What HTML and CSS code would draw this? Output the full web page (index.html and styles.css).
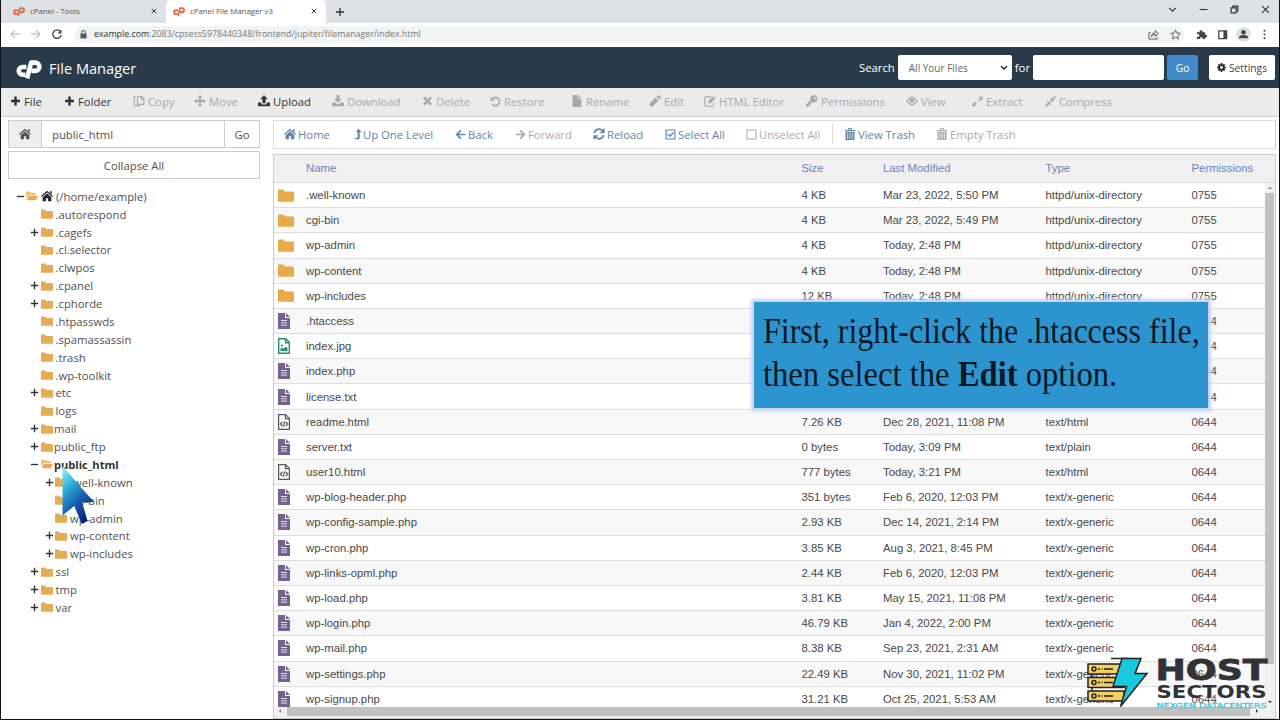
FILE: index.html
```html
<!DOCTYPE html>
<html lang="en">
<head>
<meta charset="UTF-8">
<meta name="viewport" content="width=device-width, initial-scale=1.0">
<title>cPanel File Manager v3</title>
<link rel="stylesheet" href="styles.css">
</head>
<body>
<!-- icon set -->
<svg class="sprite">
    <symbol id="cp" viewBox="0 0 24 18"><g fill="none" stroke="currentColor" stroke-width="4.300" stroke-linejoin="round"><path d="M9.600 6.600H6a3.700 3.700 0 0 0 0 7.400h2.600"/><path d="M10.200 17.400L14 2.500h4a3.900 3.900 0 0 1 0 7.800h-3.600"/></g></symbol>
    <symbol id="plus" viewBox="0 0 16 16"><path d="M6.200 1.500h3.600v4.700h4.700v3.600H9.800v4.700H6.200V9.800H1.500V6.200h4.700z"/></symbol>
    <symbol id="expand" viewBox="0 0 16 16"><path d="M6.800 1.500h2.400v5.300h5.300v2.400H9.200v5.300H6.800V9.200H1.500V6.800h5.300z"/></symbol>
    <symbol id="collapse" viewBox="0 0 16 16"><path d="M1.500 6.800h13v2.400h-13z"/></symbol>
    <symbol id="copy" viewBox="0 0 16 16"><path fill="none" stroke="currentColor" stroke-width="1.400" d="M6 2h5.500l3 3v7.500H6zM11 2v3.500h3.500M4 2H1.500v12.500H9"/></symbol>
    <symbol id="move" viewBox="0 0 16 16"><path d="M8 0l3 3.500H9.200v3.300h3.300V5L16 8l-3.500 3V9.200H9.200v3.300H11L8 16l-3-3.500h1.800V9.200H3.500V11L0 8l3.500-3v1.800h3.300V3.500H5z"/></symbol>
    <symbol id="upload" viewBox="0 0 16 16"><path d="M8 0l5 5.500h-3V11H6V5.500H3zM0 10h4.500v2.500h7V10H16v5H0z"/></symbol>
    <symbol id="download" viewBox="0 0 16 16"><path d="M6 0h4v5h3l-5 5.500L3 5h3zM0 10h4l4 3 4-3h4v5H0z"/></symbol>
    <symbol id="times" viewBox="0 0 16 16"><path d="M4 1.500l4 4 4-4L14.500 4l-4 4 4 4-2.500 2.500-4-4-4 4L1.500 12l4-4-4-4z"/></symbol>
    <symbol id="undo" viewBox="0 0 16 16"><path fill="none" stroke="currentColor" stroke-width="2.300" d="M4 3.800A6 6 0 1 1 3.200 12"/><path d="M1 1v6h6z"/></symbol>
    <symbol id="file" viewBox="0 0 16 16"><path d="M2 0h7v5h5v11H2zM10 0l4 4h-4z"/></symbol>
    <symbol id="pencil" viewBox="0 0 16 16"><path d="M1 11l7.800-7.800 4 4L5 15H1zM10 2l1.500-1.500q1-.8 2 0l2 2q.8 1 0 2L14 6z"/></symbol>
    <symbol id="edit" viewBox="0 0 16 16"><path fill="none" stroke="currentColor" stroke-width="1.500" d="M10 2.500H3q-2 0-2 2V13q0 2 2 2h8q2 0 2-2v-3"/><path d="M6 8l6.500-6.500L15.500 4 9 11H6z"/></symbol>
    <symbol id="key" viewBox="0 0 16 16"><path fill-rule="evenodd" d="M10.500 0A5 5 0 1 1 8 9.500L6.500 11v1.500H5V14H3.500v1.500H0V12.500L6 7A5 5 0 0 1 10.500 0zm1.300 2.500a1.500 1.500 0 1 0 .1 0z"/></symbol>
    <symbol id="eye" viewBox="0 0 16 16"><path fill="none" stroke="currentColor" stroke-width="1.600" d="M1 8q3-4.800 7-4.800T15 8q-3 4.800-7 4.800T1 8z"/><circle cx="8" cy="7.600" r="3.200"/></symbol>
    <symbol id="extract" viewBox="0 0 16 16"><path d="M10 1h5.500v5.500l-1.900-1.900-3 3-1.800-1.800 3-3zM.5 9.500l1.900 1.900 3-3 1.800 1.800-3 3L6 15H.5z"/></symbol>
    <symbol id="compress" viewBox="0 0 16 16"><path d="M14 0l2 2-4 4 2 2H8V2l2 2zM2 8h6v6l-2-2-4 4-2-2 4-4z"/></symbol>
    <symbol id="home" viewBox="0 0 16 16"><path d="M8 1l8 7-1 1.200L8 3.200 1 9.200 0 8zM12 1.800h2.200v4L12 4zM8 4.500l5.800 5V15H9.500v-4h-3v4H2.200V9.500z"/></symbol>
    <symbol id="up" viewBox="2 0 12 16"><path d="M9 0l4.500 5.500h-3V16H3l2-2.500h2.500v-8h-3z"/></symbol>
    <symbol id="left" viewBox="0 0 16 16"><path fill="none" stroke="currentColor" stroke-width="2.400" d="M15 8H3M8.500 2L2.500 8l6 6"/></symbol>
    <symbol id="right" viewBox="0 0 16 16"><path fill="none" stroke="currentColor" stroke-width="2.400" d="M1 8h12M7.500 2l6 6-6 6"/></symbol>
    <symbol id="reload" viewBox="0 0 16 16"><path fill="none" stroke="currentColor" stroke-width="2.200" d="M1.800 7a6.200 6.200 0 0 1 11-3M14.200 9a6.200 6.200 0 0 1-11 3"/><path d="M15.500 0v6.500H9zM.5 16V9.500H7z"/></symbol>
    <symbol id="check" viewBox="0 0 16 16"><path fill="none" stroke="currentColor" stroke-width="1.600" d="M1.500 1.500h13v13h-13z"/><path fill="none" stroke="currentColor" stroke-width="2" d="M4 7.500l3 3L12.500 5"/></symbol>
    <symbol id="uncheck" viewBox="0 0 16 16"><path fill="none" stroke="currentColor" stroke-width="1.500" d="M1.500 1.500h13v13h-13z"/></symbol>
    <symbol id="trash" viewBox="0 0 16 16"><path fill-rule="evenodd" d="M1 2.500h4L6 0h4l1 2.500h4V4H1zm5.500 0h3L9 1.300H7zM2 5h12v11H2zm2.500 1.500v8h1v-8zm3 0v8h1v-8zm3 0v8h1v-8z"/></symbol>
    <symbol id="folder" viewBox="0 0 16 13"><path d="M0 1.500Q0 .5 1 .5h4.500l1.500 2h8q1 0 1 1V12q0 .8-1 .8H1q-1 0-1-.8z"/></symbol>
    <symbol id="folder-open" viewBox="0 0 16 13"><path opacity=".75" d="M0 10V1.500Q0 .5 1 .5h4l1.500 1.800H12q1 0 1 1V5H4z"/><path d="M4 6h12l-2.500 6H1z"/></symbol>
    <symbol id="doc" viewBox="0 0 12 16"><path fill="#75628f" d="M0 0h7v5h5v11H0zM8 0l4 4H8z"/><path stroke="#e4dfec" stroke-width="1" d="M3 7.500h6M3 9.800h6M3 12.100h6"/></symbol>
    <symbol id="code" viewBox="0 0 12 16"><path fill="none" stroke="#55585f" stroke-width="1.200" d="M.6.600h7l3.800 3.800v11H.6zM7.500.600v4h3.900M4.300 8L2.300 10l2 2M7.700 8l2 2-2 2M6.700 7.400L5.300 12.600"/></symbol>
    <symbol id="image" viewBox="0 0 12 16"><path fill="none" stroke="#27906f" stroke-width="1.400" d="M.7.700h6.900l3.700 3.700v10.900H.7zM7.500.700v4h3.800"/><circle cx="4" cy="7.500" r="1.100" fill="#27906f"/><path fill="#27906f" d="M2.500 13v-2.500l1.300-1 1.500 1.200L8 8.500l1.500 1.500v3z"/></symbol>
    <symbol id="gear" viewBox="0 0 16 16"><circle cx="8" cy="8" r="4.200" fill="none" stroke="currentColor" stroke-width="3.200"/><path stroke="currentColor" stroke-width="3" d="M8 0v3M8 13v3M0 8h3M13 8h3M2.400 2.400l2 2M11.600 11.600l2 2M2.400 13.600l2-2M11.600 4.400l2-2"/></symbol>
</svg>

<div class="tabs">
    <div class="tab"><svg class="fav"><use href="#cp"/></svg><span>cPanel - Tools</span><svg class="close" viewBox="0 0 8 8"><path d="M1 1l6 6M7 1L1 7"/></svg></div>
    <div class="tab active"><svg class="fav"><use href="#cp"/></svg><span>cPanel File Manager v3</span><svg class="close" viewBox="0 0 8 8"><path d="M1 1l6 6M7 1L1 7"/></svg></div>
    <svg class="newtab" viewBox="0 0 8 8"><path d="M4 0v8M0 4h8"/></svg>
    <div class="window">
        <svg viewBox="0 0 8 8"><path d="M1 2.500l3 3 3-3"/></svg>
        <svg viewBox="0 0 8 8"><path d="M.5 4h7"/></svg>
        <svg viewBox="0 0 8 8"><path d="M1 2.500h4.500V7H1zM2.500 2.500V1H7v4.500H5.500"/></svg>
        <svg viewBox="0 0 8 8"><path d="M1 1l6 6M7 1L1 7"/></svg>
    </div>
</div>

<div class="address">
    <div class="nav">
        <svg class="faded" viewBox="0 0 10 10"><path d="M10 5H1M5 1L1 5l4 4"/></svg>
        <svg class="faded" viewBox="0 0 10 10"><path d="M0 5h9M5 1l4 4-4 4"/></svg>
        <svg viewBox="0 0 10 10"><path stroke-width="1.300" d="M8.700 3A4.200 4.200 0 1 0 9.200 6"/><path fill="#444" stroke="none" d="M9.500.500v4h-4z"/></svg>
    </div>
    <div class="url">
        <svg class="lock" viewBox="0 0 8 10"><path d="M2 4V2.500a2 2 0 0 1 4 0V4" fill="none" stroke="#555" stroke-width="1.200"/><path fill="#555" d="M.5 4h7v5.500h-7z"/></svg>
        <span><b>example.com</b>:2083/cpsess5978440348/frontend/jupiter/filemanager/index.html</span>
        <svg class="share" viewBox="0 0 12 12"><path d="M3 4H1v7h9V9M3.500 8Q4 4 8 4V1.800L11.300 5 8 8V6Q5 6 3.500 8z"/></svg>
        <svg class="star" viewBox="0 0 12 12"><path d="M6 1l1.500 3.400 3.700.3-2.800 2.500.9 3.700L6 9l-3.300 1.900.9-3.700L.8 4.700l3.700-.3z"/></svg>
    </div>
    <div class="extras">
        <svg viewBox="0 0 12 12"><path fill="#444" d="M1 3.500h3a1.600 1.600 0 1 1 3 0h3v3a1.500 1.500 0 1 1 0 2.600V11H7.200a1.500 1.500 0 1 0-2.900 0H1V8.300a1.600 1.600 0 1 0 0-2.400z"/></svg>
        <svg viewBox="0 0 12 12"><path fill="none" stroke="#444" stroke-width="1.400" d="M2 2h8.500v8.500H2z"/><path fill="#444" d="M7 2h3.500v8.500H7z"/></svg>
        <svg class="avatar" viewBox="0 0 16 16"><circle cx="8" cy="8" r="8" fill="#dfe1e5"/><circle cx="8" cy="5.500" r="2.400" fill="#444"/><path fill="#444" d="M3 12q0-3.500 5-3.500t5 3.500z"/></svg>
        <svg viewBox="0 0 12 12"><g fill="#444"><circle cx="6" cy="2" r="1.100"/><circle cx="6" cy="6" r="1.100"/><circle cx="6" cy="10" r="1.100"/></g></svg>
    </div>
</div>

<header>
    <svg class="logo"><use href="#cp"/></svg>
    <h1>File Manager</h1>
    <label>Search</label>
    <div class="select">All Your Files <svg viewBox="0 0 8 6"><path d="M1 1l3 3 3-3"/></svg></div>
    <label class="for">for</label>
    <input type="text" class="query">
    <button class="go">Go</button>
    <button class="settings"><svg class="icon"><use href="#gear"/></svg>Settings</button>
</header>

<div class="toolbar" id="toolbar"></div>

<main>
    <aside>
        <div class="path">
            <span class="root"><svg class="icon"><use href="#home"/></svg></span>
            <span class="dir">public_html</span>
            <span class="goto">Go</span>
        </div>
        <div class="collapse">Collapse All</div>
        <div class="tree" id="tree"></div>
    </aside>
    <section>
        <div class="actions" id="actions"></div>
        <div class="listing">
            <div class="row head"><span></span><span>Name</span><span>Size</span><span>Last Modified</span><span>Type</span><span>Permissions</span></div>
            <div class="body">
                <div class="rows" id="rows"></div>
                <div class="vscroll"><i class="tri top"></i><div class="thumb"></div><i class="tri down"></i></div>
            </div>
            <div class="hscroll"><i class="tri back"></i><div class="thumb"></div><i class="tri next"></i></div>
        </div>
    </section>
</main>

<div class="callout">
    <p class="line one">First, right-click the .htaccess file,</p>
    <p class="line two">then select the <b>Edit</b> option.</p>
</div>

<!-- pointer -->
<svg class="pointer" viewBox="0 0 34 62">
    <defs><linearGradient id="pg" x1="0" y1="0" x2=".55" y2="1"><stop offset="0.050" stop-color="#8ff0f0"/><stop offset=".35" stop-color="#2fb2d8"/><stop offset=".65" stop-color="#1b62b4"/><stop offset="1" stop-color="#0a2184"/></linearGradient></defs>
    <path fill="url(#pg)" d="M1.500 0L32.800 36l-11.600.5 5.300 18.500-5.500 3L13.200 40 1.500 49.500z"/>
</svg>

<!-- brand mark -->
<svg class="brand" viewBox="0 0 184 54">
    <g stroke="#222" stroke-width="1.500" fill="#f2cf5e">
        <path d="M2 9h36v10H2zM2 22.500h36v10H2zM2 36h36v10H2z"/>
        <path fill="none" d="M6 19v3.500M6 32.500V36M25 3.500h18"/>
        <g fill="none"><circle cx="8" cy="14" r="2"/><circle cx="8" cy="27.500" r="2"/><circle cx="8" cy="41" r="2"/></g>
        <path stroke-dasharray="2 1.500 1 1.500 9" d="M12 14h15M12 27.500h15M12 41h15"/>
        <path fill="#18c8dc" d="M36 3.500h19l-6 15h12L34.500 51.500l6-20H27z"/>
    </g>
    <g font-family="DejaVu Sans" font-weight="bold" fill="#30343a">
        <text x="69.500" y="24.500" font-size="28" textLength="112" lengthAdjust="spacingAndGlyphs" stroke="#30343a" stroke-width=".8">HOST</text>
        <text x="70.500" y="43" font-size="17.500" textLength="110" lengthAdjust="spacingAndGlyphs">SECTORS</text>
        <text x="70.500" y="52.500" font-size="7" fill="#3cc5e0" font-weight="normal" stroke="#3cc5e0" stroke-width=".3" textLength="110" lengthAdjust="spacingAndGlyphs">NEXGEN DATACENTERS</text>
    </g>
</svg>

<script>
    const icon = (name, cls = "icon") => `<svg class="${cls}"><use href="#${name}"/></svg>`;

    // [icon, label, enabled]
    const tools = [
        ["plus", "File", 1], ["plus", "Folder", 1], ["copy", "Copy"], ["move", "Move"], ["upload", "Upload", 1],
        ["download", "Download"], ["times", "Delete"], ["undo", "Restore"], ["file", "Rename"], ["pencil", "Edit"],
        ["edit", "HTML Editor"], ["key", "Permissions"], ["eye", "View"], ["extract", "Extract"], ["compress", "Compress"]
    ];
    const actions = [
        ["home", "Home", 1], ["up", "Up One Level", 1], ["left", "Back", 1], ["right", "Forward"], ["reload", "Reload", 1],
        ["check", "Select All", 1], ["uncheck", "Unselect All"], ["trash", "View Trash", 1], ["trash", "Empty Trash"]
    ];
    const button = ([name, label, on]) => `<a class="${on ? "on" : "off"}">${icon(name, "icon " + name)}${label}</a>`;
    document.getElementById("toolbar").innerHTML = tools.map(button).join("");
    document.getElementById("actions").innerHTML = actions.map(button).join("");

    // [level, toggle, label]
    const tree = [
        [0, "-", "(/home/example)"], [1, "", ".autorespond"], [1, "+", ".cagefs"], [1, "", ".cl.selector"],
        [1, "", ".clwpos"], [1, "+", ".cpanel"], [1, "+", ".cphorde"], [1, "", ".htpasswds"], [1, "", ".spamassassin"],
        [1, "", ".trash"], [1, "", ".wp-toolkit"], [1, "+", "etc"], [1, "", "logs"], [1, "+", "mail"],
        [1, "+", "public_ftp"], [1, "-", "public_html"], [2, "+", ".well-known"], [2, "", "cgi-bin"],
        [2, "", "wp-admin"], [2, "+", "wp-content"], [2, "+", "wp-includes"], [1, "+", "ssl"], [1, "+", "tmp"], [1, "+", "var"]
    ];
    const tight = ["mail", "public_ftp", "public_html"];
    document.getElementById("tree").innerHTML = tree.map(([level, t, label]) => {
        const toggle = t ? icon(t === "+" ? "expand" : "collapse", "toggle") : '<i class="toggle"></i>';
        const extra = (tight.includes(label) ? " tight" : "") + (label === "public_html" ? " current" : "");
        return `<div class="node level${level}${extra}">${toggle}${icon(t === "-" ? "folder-open" : "folder", "folder")}` +
            `${level ? "" : icon("home", "house")}<span>${label}</span></div>`;
    }).join("");

    const dir = "httpd/unix-directory", gen = "text/x-generic";
    const files = [
        ["folder", ".well-known", "4 KB", "Mar 23, 2022, 5:50 PM", dir],
        ["folder", "cgi-bin", "4 KB", "Mar 23, 2022, 5:49 PM", dir],
        ["folder", "wp-admin", "4 KB", "Today, 2:48 PM", dir],
        ["folder", "wp-content", "4 KB", "Today, 2:48 PM", dir],
        ["folder", "wp-includes", "12 KB", "Today, 2:48 PM", dir],
        ["doc", ".htaccess", "", "", ""],
        ["image", "index.jpg", "", "", ""],
        ["doc", "index.php", "", "", ""],
        ["doc", "license.txt", "", "", ""],
        ["code", "readme.html", "7.26 KB", "Dec 28, 2021, 11:08 PM", "text/html"],
        ["doc", "server.txt", "0 bytes", "Today, 3:09 PM", "text/plain"],
        ["code", "user10.html", "777 bytes", "Today, 3:21 PM", "text/html"],
        ["doc", "wp-blog-header.php", "351 bytes", "Feb 6, 2020, 12:03 PM", gen],
        ["doc", "wp-config-sample.php", "2.93 KB", "Dec 14, 2021, 2:14 PM", gen],
        ["doc", "wp-cron.php", "3.85 KB", "Aug 3, 2021, 8:45 PM", gen],
        ["doc", "wp-links-opml.php", "2.44 KB", "Feb 6, 2020, 12:03 PM", gen],
        ["doc", "wp-load.php", "3.81 KB", "May 15, 2021, 11:08 PM", gen],
        ["doc", "wp-login.php", "46.79 KB", "Jan 4, 2022, 2:00 PM", gen],
        ["doc", "wp-mail.php", "8.38 KB", "Sep 23, 2021, 2:31 AM", gen],
        ["doc", "wp-settings.php", "22.49 KB", "Nov 30, 2021, 11:02 PM", gen],
        ["doc", "wp-signup.php", "31.21 KB", "Oct 25, 2021, 5:53 AM", gen]
    ];
    document.getElementById("rows").innerHTML = files.map(([type, name, size, date, mime]) =>
        `<div class="row"><span>${icon(type, type === "folder" ? "big folder" : "big")}</span><span>${name}</span><span>${size}</span>` +
        `<span>${date}</span><span>${mime}</span><span>${type === "folder" ? "0755" : "0644"}</span></div>`
    ).join("");
</script>
</body>
</html>
```
FILE: styles.css
```css
* { box-sizing: border-box; }

body {
    margin: 0;
    width: 1280px;
    height: 720px;
    overflow: hidden;
    display: flex;
    flex-direction: column;
    border: solid #111;
    border-width: 0 1px 1px;
    background: #fff;
    color: #505050;
    font: 11.3px "Open Sans", sans-serif;
}

svg { fill: currentColor; flex: none; }
.sprite { display: none; }
.icon { width: 12px; height: 12px; }

/* browser chrome */
.tabs {
    display: flex;
    align-items: center;
    height: 23px;
    background: #dee1e6;
    font-size: 7.8px;
    color: #555;
}
.tab {
    display: flex;
    align-items: center;
    width: 165px;
    height: 23px;
    padding: 0 9px 1px 12px;
}
.tab.active { background: #fff; border-radius: 5px 5px 0 0; width: 160px; padding-left: 7px; }
.tab span { flex: 1; }
.fav { width: 12px; height: 9px; margin-right: 5px; color: #e0714f; }
.close, .newtab { width: 6px; height: 6px; stroke: #333; stroke-width: 1.3; }
.newtab { width: 8px; height: 8px; margin-left: 10px; }
.window { display: flex; margin-left: auto; gap: 22px; padding: 0 9px 4px 0; }
.window svg { width: 9px; height: 9px; fill: none; stroke: #333; }

.address {
    display: flex;
    align-items: center;
    height: 24px;
    flex: none;
    padding-bottom: 2px;
}
.nav { display: flex; gap: 11px; padding-left: 9px; width: 74px; }
.nav svg { width: 10px; height: 10px; fill: none; stroke: #444; }
.nav .faded { stroke: #aaa; }
.url {
    display: flex;
    align-items: center;
    width: 1109px;
    height: 17px;
    border-radius: 9px;
    background: #f1f3f4;
    font-size: 8.8px;
    color: #777;
    padding: 0 3px 0 5px;
}
.url b { font-weight: normal; color: #333; }
.lock { width: 7px; height: 9px; margin-right: 7px; }
.share { margin-left: auto; margin-right: 11px; }
.share, .star { width: 11px; height: 11px; fill: none; stroke: #555; }
.extras { display: flex; align-items: center; gap: 10px; padding-left: 12px; }
.extras svg { width: 11px; height: 11px; }
.extras .avatar { width: 15px; height: 15px; margin: 0 -2px; }

/* app header */
header {
    display: flex;
    align-items: center;
    height: 41px;
    flex: none;
    padding: 0 4px 0 15px;
    background: #293a4a;
    color: #fff;
}
.logo { width: 26px; height: 19px; margin-top: 3px; }
h1 { margin: 1px auto 0 7px; font-size: 14.6px; font-weight: normal; }
label { padding-bottom: 1px; }
header .select {
    display: flex;
    align-items: center;
    justify-content: space-between;
    width: 114px;
    height: 25px;
    margin: 0 3px;
    padding: 0 4px 0 11px;
    border-radius: 2px;
    background: #fff;
    color: #666;
    font-size: 10px;
}
.select svg { width: 8px; height: 6px; fill: none; stroke: #222; stroke-width: 1.4; }
.query { width: 131px; height: 25px; margin: 0 3px; border: 0; border-radius: 2px; }
button { font: 10.3px "Open Sans", sans-serif; height: 25px; border: 0; border-radius: 2px; padding: 0; }
.go { width: 31px; background: #428bca; color: #fff; }
.settings { display: flex; align-items: center; justify-content: center; gap: 3px; width: 66px; margin-left: 11px; background: #fff; color: #444; }
.settings .icon { width: 9px; height: 9px; color: #222; }

.toolbar, .actions { display: grid; align-items: center; }
.toolbar {
    grid-template-columns: 54px 69px 61px 64px 74px 90px 68px 81px 78px 55px 102px 100px 66px 73px 90px;
    height: 29px;
    flex: none;
    padding: 0 0 2px 9px;
    background: #ebebeb;
    border-bottom: 1px solid #ccc;
}
a { display: flex; align-items: center; gap: 3px; white-space: nowrap; }
.toolbar a.on { color: #333; }
.toolbar a.off, .actions a.off { color: #a9a9a9; }
.toolbar .extract, .toolbar .compress, .toolbar .undo { width: 11px; height: 11px; }
.toolbar .times, .toolbar .plus { width: 11px; }
.actions a.on { color: #5d86a6; }
.icon.up { width: 8px; margin-right: -1px; }
.icon.left, .icon.right { width: 11px; height: 11px; gap: 2px; }
.icon.check, .icon.uncheck { width: 11px; height: 11px; }

main { display: flex; flex: 1; min-height: 0; padding-top: 3px; }

/* folder tree */
aside { width: 271.5px; padding: 0 12.5px 0 7px; }
.path, .collapse { display: flex; align-items: center; border: 1px solid #ccc; height: 28px; }
.path span { display: flex; align-items: center; height: 100%; }
.path .root { width: 33px; justify-content: center; background: #eee; border-right: 1px solid #ccc; }
.path .dir { flex: 1; padding-left: 10px; }
.path .goto { width: 35px; justify-content: center; border-left: 1px solid #ccc; }
.collapse { justify-content: center; margin-top: 3px; }
.tree { margin-top: 8.4px; }
.node { display: flex; align-items: center; height: 17.89px; }
.level0 { padding-left: 7.5px; }
.level1 { padding-left: 22px; }
.level2 { padding-left: 36.5px; }
.toggle { width: 9px; height: 9px; margin-right: 1.5px; color: #333; }
.folder { width: 12px; height: 10px; margin-right: 3px; color: #e5ac55; }
.house { width: 12px; height: 12px; margin-right: 3px; color: #222; }
.current { font-weight: bold; color: #333; font-size: 11.1px; }
.tight .folder { margin-right: 1.5px; }

/* file listing */
section { width: 1003px; display: flex; flex-direction: column; }
.actions {
    grid-template-columns: 70px 101px 60px 78px 72px 81px 98px 92px 100px;
    height: 29px;
    padding-left: 10px;
    border: 1px solid #ddd;
    border-right-color: #ccc;
}
.actions a { gap: 2.5px; }
.actions a:nth-child(8) { border-left: 1px solid #ddd; height: 20px; margin-left: -12px; padding-left: 11px; }
.listing { display: flex; flex-direction: column; height: 566px; margin-top: 5px; border: 1px solid #ccc; background: #eee; }
.row {
    display: grid;
    grid-template-columns: 32.5px 495.5px 81.5px 162.5px 146px 1fr;
    align-items: center;
    height: 25.2px;
    border-bottom: 1px solid #ddd;
    background: #fff;
    font: 11.35px "Liberation Sans", Arial, sans-serif;
    color: #484848;
    white-space: nowrap;
}
.row:nth-child(even) { background: #f8f8f8; }
.row span { display: flex; align-items: center; }
.row.head { height: 28px; flex: none; background: #f0f0f0; color: #6a84b8; }
.big { width: 12px; height: 16px; margin-left: 4px; }
.big.folder { width: 16px; height: 13px; color: #e8ab48; }
.body { display: flex; height: 524px; overflow: hidden; }
.rows { width: 991px; }
.vscroll, .hscroll { display: flex; align-items: center; background: #f1f1f1; }
.vscroll { flex-direction: column; width: 10px; gap: 4px; padding: 4px 0; }
.vscroll .thumb { width: 9px; height: 471px; background: #c1c1c1; }
.hscroll { height: 9px; padding: 0 5px; gap: 6px; }
.hscroll .thumb { width: 963px; height: 9px; background: #c1c1c1; }
.tri { border: 2px solid transparent; }
.top { border-bottom-color: #777; border-top: 0; }
.down { border-top-color: #333; border-bottom: 0; margin-top: auto; }
.back { border-right-color: #777; border-left: 0; }
.next { border-left-color: #333; border-right: 0; }

/* things floating over the page */
.callout {
    position: absolute;
    left: 754px;
    top: 302px;
    width: 454px;
    height: 106px;
    padding: 8px 0 0 9px;
    background: #2c95cf;
    box-shadow: 0 0 3px 3px #c5d3f2;
    color: #0b1826;
    font: 35px/43px "Liberation Serif", serif;
    white-space: nowrap;
}
.line { margin: 0; width: max-content; transform-origin: 0 0; }
.line.one { transform: scaleX(.915); }
.line.two { transform: scaleX(.932); }
.pointer { position: absolute; left: 61px; top: 466px; width: 34px; height: 62px; }
.brand { position: absolute; left: 1086px; top: 655px; width: 184px; height: 54px; }
```
